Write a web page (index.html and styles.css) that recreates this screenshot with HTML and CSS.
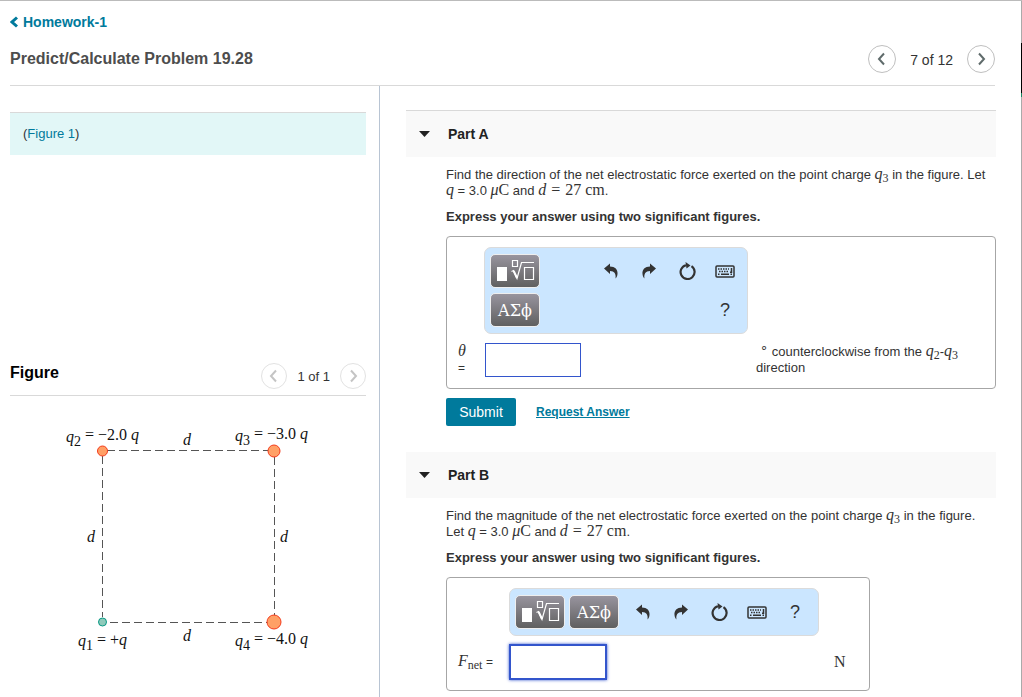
FILE: index.html
```html
<!DOCTYPE html>
<html lang="en">
<head>
    <meta charset="UTF-8">
    <meta name="viewport" content="width=device-width, initial-scale=1.0">
    <title>Homework-1</title>
    <link rel="stylesheet" href="styles.css">
</head>
<body>
    <!-- shared icons -->
    <svg class="icon-defs" aria-hidden="true">
        <symbol id="icon-left" viewBox="0 0 14 14">
            <path d="M9 1.5 L4 7 L9 12.5" fill="none" stroke="currentColor" stroke-width="2"/>
        </symbol>
        <symbol id="icon-right" viewBox="0 0 14 14">
            <path d="M5 1.5 L10 7 L5 12.5" fill="none" stroke="currentColor" stroke-width="2"/>
        </symbol>
        <symbol id="icon-template" viewBox="0 0 40 24">
            <rect x="2" y="8" width="10" height="14" fill="#fff"/>
            <path d="M17.500 1.500h5v6h-5zM16.500 12.500l2-1 3.500 8 4.500-16H39M29.500 8.500h9v12h-9z" fill="none" stroke="#fff" stroke-width="1.200"/>
            <path d="M18.700 12l3.300 7" fill="none" stroke="#fff" stroke-width="2"/>
        </symbol>
        <symbol id="icon-undo" viewBox="0 0 16 16">
            <path d="M1 5.500 L7 0.500 V3.500 C12 3.500 15 6.500 14.500 11 C14.300 13 13.500 14.500 12.500 15.500 C13.300 11 11.500 8 7 8 V11 Z" fill="currentColor"/>
        </symbol>
        <symbol id="icon-redo" viewBox="0 0 16 16">
            <path d="M15 5.500 L9 0.500 V3.500 C4 3.500 1 6.500 1.500 11 C1.700 13 2.500 14.500 3.500 15.500 C2.700 11 4.500 8 9 8 V11 Z" fill="currentColor"/>
        </symbol>
        <symbol id="icon-reset" viewBox="0 0 18 18">
            <path d="M13.500 4.200 A7 7 0 1 1 8 3.200" fill="none" stroke="currentColor" stroke-width="2.200"/>
            <path d="M7.500 0 L12.500 3.400 L8.500 6.500 Z" fill="currentColor"/>
        </symbol>
        <symbol id="icon-keyboard" viewBox="0 0 20 13">
            <rect x="1" y="1" width="18" height="11" rx="1" fill="none" stroke="currentColor" stroke-width="1.500"/>
            <path d="M3 4h11M4 6.500h10" stroke="currentColor" stroke-width="1.500" stroke-dasharray="1.500 1"/>
            <path d="M16.500 3v4.200H15M3 9.200h1.500M6 9.200h8M15.500 9.200H17" fill="none" stroke="currentColor" stroke-width="1.500"/>
        </symbol>
    </svg>

    <div class="page">
        <header class="page-header">
            <a class="back-link" href="#"><svg viewBox="0 0 9 12"><path d="M7 1.500 L2 6 L7 10.500" fill="none" stroke="currentColor" stroke-width="3"/></svg>Homework-1</a>
            <div class="title-row">
                <h1>Predict/Calculate Problem 19.28</h1>
                <nav class="pager">
                    <button type="button" aria-label="Previous item"><svg><use href="#icon-left"/></svg></button>
                    <span>7 of 12</span>
                    <button type="button" aria-label="Next item"><svg><use href="#icon-right"/></svg></button>
                </nav>
            </div>
        </header>

        <div class="columns">
            <aside class="left-column">
                <div class="prompt-area">
                    <p class="prompt">(<a href="#figure">Figure 1</a>)</p>
                </div>
                <section id="figure">
                    <div class="figure-header">
                        <h2>Figure</h2>
                        <nav class="pager pager-small">
                            <button type="button" aria-label="Previous figure" disabled><svg><use href="#icon-left"/></svg></button>
                            <span>1 of 1</span>
                            <button type="button" aria-label="Next figure" disabled><svg><use href="#icon-right"/></svg></button>
                        </nav>
                    </div>
                    <svg class="diagram" viewBox="0 0 356 270">
                        <g class="dashes">
                            <path d="M97 54.500H258M92.500 60V221M264.500 61V220M100 226.500H258"/>
                        </g>
                        <circle class="negative" cx="92.500" cy="55" r="5"/>
                        <circle class="negative" cx="264" cy="55" r="6"/>
                        <circle class="negative" cx="264" cy="226" r="7"/>
                        <circle class="positive" cx="92.500" cy="226" r="4"/>
                        <text x="56" y="46"><tspan class="var">q</tspan><tspan class="small" dy="4">2</tspan><tspan dy="-6"> = −2.0 </tspan><tspan class="var">q</tspan></text>
                        <text x="225" y="45"><tspan class="var">q</tspan><tspan class="small" dy="4">3</tspan><tspan dy="-6"> = −3.0 </tspan><tspan class="var">q</tspan></text>
                        <text x="68" y="250"><tspan class="var">q</tspan><tspan class="small" dy="4">1</tspan><tspan dy="-5"> = +</tspan><tspan class="var">q</tspan></text>
                        <text x="225" y="250"><tspan class="var">q</tspan><tspan class="small" dy="4">4</tspan><tspan dy="-6"> = −4.0 </tspan><tspan class="var">q</tspan></text>
                        <text class="var" x="173" y="49">d</text>
                        <text class="var" x="77" y="146">d</text>
                        <text class="var" x="270" y="146">d</text>
                        <text class="var" x="173" y="245">d</text>
                    </svg>
                </section>
            </aside>

            <main class="right-column">
                <section class="part">
                    <h2 class="part-header part-header-first"><button type="button"><svg viewBox="0 0 11 6"><path d="M0 0h11L5.500 6z"/></svg>Part A</button></h2>
                    <form class="part-body">
                        <p>Find the direction of the net electrostatic force exerted on the point charge <span class="math"><i>q</i><sub>3</sub></span> in the figure. Let <span class="given"><span class="math"><i>q</i></span> = 3.0</span> <span class="math"><i>μ</i>C</span> and <span class="math"><i>d</i> <span class="relation">=</span> 27 cm</span>.</p>
                        <p class="instruction">Express your answer using two significant figures.</p>
                        <div class="answer-box answer-theta">
                            <div class="toolbar toolbar-wrapped">
                                <button type="button" class="palette" aria-label="Templates"><svg><use href="#icon-template"/></svg></button>
                                <button type="button" class="tool tool-undo" aria-label="Undo"><svg><use href="#icon-undo"/></svg></button>
                                <button type="button" class="tool" aria-label="Redo"><svg><use href="#icon-redo"/></svg></button>
                                <button type="button" class="tool" aria-label="Reset"><svg class="large"><use href="#icon-reset"/></svg></button>
                                <button type="button" class="tool" aria-label="Keyboard"><svg class="wide"><use href="#icon-keyboard"/></svg></button>
                                <button type="button" class="palette palette-symbols">ΑΣϕ</button>
                                <button type="button" class="tool tool-help">?</button>
                            </div>
                            <label for="theta"><span class="math"><i>θ</i></span> <span class="equals">=</span></label>
                            <input type="text" id="theta" name="theta">
                            <span class="unit"><span class="degree">∘</span> counterclockwise from the <span class="math"><i>q</i><sub>2</sub></span>-<span class="math"><i>q</i><sub>3</sub></span> direction</span>
                        </div>
                        <div class="actions">
                            <button type="submit" class="submit-button">Submit</button>
                            <a href="#">Request Answer</a>
                        </div>
                    </form>
                </section>

                <section class="part">
                    <h2 class="part-header"><button type="button"><svg viewBox="0 0 11 6"><path d="M0 0h11L5.500 6z"/></svg>Part B</button></h2>
                    <form class="part-body">
                        <p>Find the magnitude of the net electrostatic force exerted on the point charge <span class="math"><i>q</i><sub>3</sub></span> in the figure. Let <span class="given"><span class="math"><i>q</i></span> = 3.0</span> <span class="math"><i>μ</i>C</span> and <span class="math"><i>d</i> <span class="relation">=</span> 27 cm</span>.</p>
                        <p class="instruction">Express your answer using two significant figures.</p>
                        <div class="answer-box answer-force">
                            <div class="toolbar">
                                <button type="button" class="palette" aria-label="Templates"><svg><use href="#icon-template"/></svg></button>
                                <button type="button" class="palette palette-symbols">ΑΣϕ</button>
                                <button type="button" class="tool" aria-label="Undo"><svg><use href="#icon-undo"/></svg></button>
                                <button type="button" class="tool" aria-label="Redo"><svg><use href="#icon-redo"/></svg></button>
                                <button type="button" class="tool" aria-label="Reset"><svg class="large"><use href="#icon-reset"/></svg></button>
                                <button type="button" class="tool" aria-label="Keyboard"><svg class="wide"><use href="#icon-keyboard"/></svg></button>
                                <button type="button" class="tool tool-help">?</button>
                            </div>
                            <label for="force"><span class="math"><i>F</i><sub>net</sub></span> <span class="equals">=</span></label>
                            <input type="text" id="force" name="force" class="active">
                            <span class="unit math">N</span>
                        </div>
                    </form>
                </section>
            </main>
        </div>
    </div>
</body>
</html>
```

FILE: styles.css
```css
* {
    box-sizing: border-box;
}
body {
    margin: 0;
    font-family: "Liberation Sans", Arial, sans-serif;
    font-size: 13px;
    line-height: 16px;
    color: #333;
    background: #fff;
}
h1, h2, p {
    margin: 0;
}
h1, h2 {
    font-size: 16px;
    line-height: 20px;
}
a {
    color: #007a9c;
    text-decoration: none;
}
button {
    font-family: inherit;
    padding: 0;
    border: none;
    background: none;
    color: inherit;
    cursor: pointer;
}
.icon-defs {
    position: absolute;
    width: 0;
    height: 0;
}
.page {
    display: flex;
    flex-direction: column;
    min-height: 100vh;
    padding-left: 10px;
    border-top: 1px solid #bbb;
    /* thin strip of the window edge */
    background: linear-gradient(#aaa 42px, #000 42px, #000 92px, #168a62 92px, #168a62 96px, #aaa 96px) right / 1px 100% no-repeat;
}

/* header */
.page-header {
    margin-right: 27px;
    padding-top: 12px;
    padding-bottom: 12px;
    border-bottom: 1px solid #d9d9d9;
}
.back-link {
    display: flex;
    align-items: center;
    gap: 4px;
    font-size: 14px;
    line-height: 18px;
    font-weight: bold;
}
.back-link svg {
    width: 9px;
    height: 12px;
}
.title-row {
    display: flex;
    align-items: center;
    justify-content: space-between;
    margin-top: 14px;
}
.title-row h1 {
    color: #4d4d4d;
}
.pager {
    display: flex;
    align-items: center;
    gap: 14px;
    font-size: 14px;
}
.pager span {
    padding-top: 2px;
}
.pager button {
    display: flex;
    align-items: center;
    justify-content: center;
    width: 28px;
    height: 28px;
    border: 1px solid #bfbfbf;
    border-radius: 50%;
    color: #5f6b6b;
}
.pager svg {
    width: 14px;
    height: 14px;
}
.pager-small {
    gap: 10px;
    font-size: 13px;
}
.pager-small button {
    width: 26px;
    height: 26px;
    border-color: #e2e2e2;
    color: #c4c4c4;
}

/* left column */
.columns {
    display: flex;
    flex: 1;
}
.left-column {
    flex: none;
    width: 370px;
    padding: 26px 13px 0 0;
    border-right: 1px solid #b8c4d3;
}
.prompt-area {
    min-height: 244px;
}
.prompt {
    padding: 13px;
    border-top: 1px solid #d9d9d9;
    background: #e2f7f7;
}
.figure-header {
    display: flex;
    align-items: center;
    justify-content: space-between;
    height: 40px;
    border-bottom: 1px solid #d9d9d9;
}
.figure-header h2 {
    color: #000;
    padding-bottom: 6px;
}
.diagram {
    display: block;
    width: 100%;
    font-family: "Liberation Serif", "Times New Roman", serif;
    font-size: 16px;
    fill: #111;
}
.diagram .var {
    font-style: italic;
}
.diagram .small {
    font-size: 14px;
}
.dashes path {
    fill: none;
    stroke: #555;
    stroke-dasharray: 8 4;
}
.negative {
    fill: #ffa066;
    stroke: #f43b1c;
}
.positive {
    fill: #8fcabb;
    stroke: #0a9a85;
}

/* right column */
.right-column {
    flex: 1;
    padding: 24px 26px 6px;
}
.part + .part {
    margin-top: 26px;
}
.part-header {
    background: #f9f9f9;
}
.part-header-first {
    border-top: 1px solid #d9d9d9;
}
.part-header button {
    display: flex;
    align-items: center;
    gap: 18px;
    width: 100%;
    height: 46px;
    padding-left: 13px;
    font-size: 14px;
    font-weight: bold;
    color: #222;
}
.part-header svg {
    width: 11px;
    height: 6px;
    fill: #222;
}
.part-body {
    padding: 10px 0 0 40px;
}
.part-body p {
    margin-bottom: 10px;
}
.part-body .instruction {
    margin-bottom: 11px;
    font-weight: bold;
}
.math {
    font-family: "Liberation Serif", "Times New Roman", serif;
    font-size: 16px;
    line-height: 0;
}
.given {
    white-space: nowrap;
}
.relation {
    margin: 0 1px;
}
sub {
    font-size: 12px;
    line-height: 0;
    vertical-align: -3px;
}

/* answer box */
.answer-box {
    display: grid;
    row-gap: 8px;
    align-items: center;
    padding: 10px 11px;
    border: 1px solid #a6a6a6;
    border-radius: 4px;
}
.answer-theta {
    grid-template-columns: 26px 264px 1fr;
}
.answer-force {
    grid-template-columns: 51px 310px auto;
    width: fit-content;
    padding-right: 23px;
}
.answer-box label {
    grid-column: 1;
}
.answer-theta .equals {
    display: block;
}
.equals {
    font-size: 12px;
}
.answer-box input {
    width: 96px;
    height: 34px;
    margin: 1px;
    padding: 0 6px;
    border: 1px solid #3355cc;
    font-size: 15px;
    outline: none;
}
.answer-box input.active {
    width: 98px;
    height: 36px;
    margin: 0;
    border-width: 2px;
    box-shadow: 0 0 3px #3355cc;
}
.unit {
    padding-left: 8px;
}
.answer-force .unit {
    padding-left: 15px;
}
.degree {
    margin-left: 4px;
    font-family: "DejaVu Sans", sans-serif;
    font-size: 13px;
    line-height: 0;
    vertical-align: 4px;
}

/* toolbar */
.toolbar {
    grid-column: 2;
    display: flex;
    padding: 6px 3px 6px 5px;
    border: 1px solid #dbdbdb;
    border-radius: 7px;
    background: #cbe6ff;
}
.toolbar-wrapped {
    display: grid;
    grid-template-columns: 50px 1fr 38px 38px 38px;
    row-gap: 5px;
}
.palette {
    display: flex;
    align-items: center;
    justify-content: center;
    width: 50px;
    height: 34px;
    border: 1px solid #eee;
    border-radius: 5px;
    background: linear-gradient(#98949e, #606060);
    color: #fff;
}
.palette + .palette {
    margin: 0 5px 0 4px;
}
.palette svg {
    width: 40px;
    height: 24px;
}
.palette-symbols {
    font-family: "DejaVu Serif", serif;
    font-size: 16px;
}
.tool {
    display: flex;
    align-items: center;
    justify-content: center;
    width: 38px;
    height: 34px;
}
.tool-undo {
    justify-self: end;
}
.tool svg {
    width: 16px;
    height: 16px;
}
.tool .large {
    width: 18px;
    height: 18px;
}
.tool .wide {
    width: 20px;
    height: 13px;
}
.tool-help {
    font-size: 18px;
}
.toolbar-wrapped .tool-help {
    grid-column: 5;
}

/* actions */
.actions {
    display: flex;
    align-items: center;
    gap: 20px;
    margin-top: 9px;
}
.actions a {
    font-size: 12px;
    font-weight: bold;
    text-decoration: underline;
}
.submit-button {
    width: 70px;
    height: 28px;
    border-radius: 2px;
    background: #007a9c;
    color: #fff;
    font-size: 14px;
}
```
